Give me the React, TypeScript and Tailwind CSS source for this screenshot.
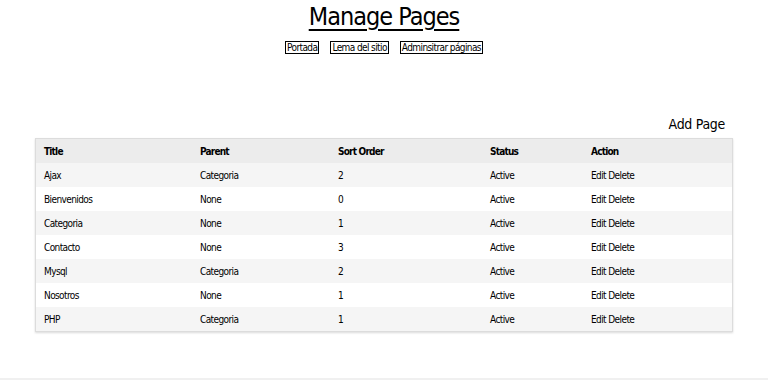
import React from "react";

const rows = [
  ["Ajax", "Categoria", "2", "Active"],
  ["Bienvenidos", "None", "0", "Active"],
  ["Categoria", "None", "1", "Active"],
  ["Contacto", "None", "3", "Active"],
  ["Mysql", "Categoria", "2", "Active"],
  ["Nosotros", "None", "1", "Active"],
  ["PHP", "Categoria", "1", "Active"],
];

export default function App() {
  return (
    <div className="min-h-[380px] bg-white font-['DejaVu_Sans_Condensed','DejaVu_Sans',sans-serif] text-black flex flex-col">
      <div className="w-[698px] mx-auto flex-1">
        <h1 className="text-center text-[25px] leading-[30px] pt-[2px] tracking-[-1px]">
          <span className="underline decoration-[2px] underline-offset-[4px]">Manage Pages</span>
        </h1>
        <nav className="flex justify-center gap-[11px] mt-[9px] text-[10px] leading-[11px] tracking-[-0.6px]">
          <a className="border border-black px-[1px]">Portada</a>
          <a className="border border-black px-[1px]">Lema del sitio</a>
          <a className="border border-black px-[1px]">Adminsitrar páginas</a>
        </nav>
        <div className="flex justify-end mt-[61px] pr-[8px] text-[14px] leading-[18px] tracking-[-0.3px]">
          <a>Add Page</a>
        </div>
        <div className="mt-[5px] border border-[#dcdcdc] shadow-[0_1px_2px_rgba(0,0,0,0.15)]">
          <table className="w-full text-[10px] tracking-[-0.6px] border-collapse">
            <thead>
              <tr className="bg-[#ececec] h-[24px] text-left tracking-[-0.8px]">
                <th className="w-[156px] pl-[8px] font-bold">Title</th>
                <th className="w-[138px] pl-[8px] font-bold">Parent</th>
                <th className="w-[152px] pl-[8px] font-bold">Sort Order</th>
                <th className="w-[101px] pl-[8px] font-bold">Status</th>
                <th className="pl-[8px] font-bold">Action</th>
              </tr>
            </thead>
            <tbody>
              {rows.map((r, i) => (
                <tr key={r[0]} className={"h-[24px] " + (i % 2 === 0 ? "bg-[#f5f5f5]" : "bg-white")}>
                  <td className="pl-[8px]">{r[0]}</td>
                  <td className="pl-[8px]">{r[1]}</td>
                  <td className="pl-[8px]">{r[2]}</td>
                  <td className="pl-[8px]">{r[3]}</td>
                  <td className="pl-[8px]">Edit Delete</td>
                </tr>
              ))}
            </tbody>
          </table>
        </div>
      </div>
      <div className="h-[2px] bg-[#f0f0f0]"></div>
    </div>
  );
}
